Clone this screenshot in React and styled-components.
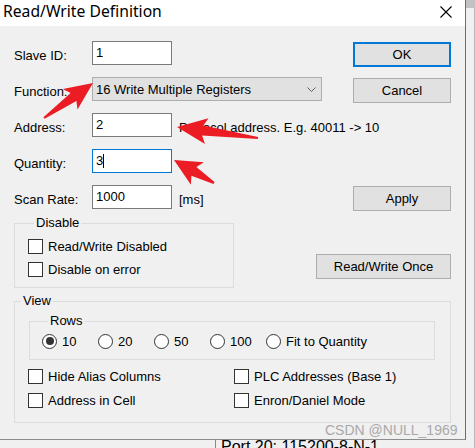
import React from "react";
import styled, { createGlobalStyle } from "styled-components";

const Global = createGlobalStyle`
  html, body { margin: 0; padding: 0; }
  body {
    width: 475px;
    height: 448px;
    overflow: hidden;
    background: #f0f0f0;
    font-family: "Liberation Sans", Arial, sans-serif;
  }
  * { box-sizing: border-box; }
`;

const Desktop = styled.div`
  position: relative;
  width: 475px;
  height: 448px;
  overflow: hidden;
  display: flex;
  flex-direction: column;
  justify-content: flex-end;
  background:
    linear-gradient(#c2c2c2, #c2c2c2) no-repeat right 0 top 0 / 9px 8px,
    linear-gradient(#b8b8b8, #b8b8b8) no-repeat right 0 top 0 / 1px 448px,
    #f0f0f0;
`;

const BackBar = styled.div`
  height: 10px;
  padding-left: 215px;
  display: flex;
`;

const BackText = styled.div`
  border-left: 1px solid #8a8a8a;
  padding-left: 5px;
  font-size: 16px;
  line-height: 18px;
  color: #000;
  white-space: nowrap;
`;

const Dialog = styled.div`
  position: absolute;
  top: 0;
  left: 0;
  width: 466px;
  height: 440px;
  background: #f0f0f0;
  border-right: 1px solid #6e6e6e;
  border-bottom: 1px solid #8c8c8c;
  display: flex;
  flex-direction: column;
`;

const TitleBar = styled.div`
  height: 26px;
  flex: none;
  background: #fff;
  display: flex;
  justify-content: space-between;
  align-items: flex-start;
  padding: 1px 13px 0 3px;
`;

const Title = styled.div`
  font-family: "Noto Sans", "Open Sans", sans-serif;
  font-size: 15.7px;
  line-height: 20px;
  color: #000;
`;

const CloseIcon = styled.svg`
  margin-top: 5px;
  width: 12px;
  height: 12px;
`;

const Body = styled.div`
  flex: 1;
  padding: 15px 14px 0 14px;
  font-size: 13px;
  line-height: 15px;
  color: #000;
`;

const FormGrid = styled.div`
  display: grid;
  grid-template-columns: 78px 261px 98px;
  grid-auto-rows: 24px;
  row-gap: 12px;
`;

const Label = styled.div`
  padding-top: 7px;
  white-space: nowrap;
`;

const Field = styled.div`
  display: flex;
  align-items: flex-start;
  gap: 7px;
`;

const TextBox = styled.div`
  width: 80px;
  height: 24px;
  flex: none;
  background: #fff;
  border: 1px solid ${(p) => (p.$focused ? "#0078d7" : "#7a7a7a")};
  padding: 3px 3px;
  white-space: nowrap;
  display: flex;
`;

const Caret = styled.span`
  display: inline-block;
  width: 1px;
  height: 14px;
  margin-top: 1px;
  background: #000;
`;

const Hint = styled.span`
  padding-top: 7px;
  white-space: nowrap;
`;

const Combo = styled.div`
  width: 230px;
  height: 24px;
  background: #e1e1e1;
  border: 1px solid #adadad;
  display: flex;
  align-items: center;
  justify-content: space-between;
  padding: 0 5px 0 3px;
  white-space: nowrap;
`;

const Chevron = styled.svg`
  width: 9px;
  height: 5px;
`;

const Button = styled.div`
  width: ${(p) => p.$width || 98}px;
  height: 25px;
  margin-top: ${(p) => (p.$flush ? 0 : 1)}px;
  margin-bottom: ${(p) => p.$bottom || 0}px;
  background: #e1e1e1;
  border: ${(p) => (p.$primary ? "2px solid #0078d7" : "1px solid #adadad")};
  display: flex;
  align-items: center;
  justify-content: center;
  white-space: nowrap;
  justify-self: end;
`;

const MiddleRow = styled.div`
  margin-top: 6px;
  display: flex;
  justify-content: space-between;
  align-items: flex-end;
`;

const Group = styled.fieldset`
  margin: ${(p) => p.$margin || "0"};
  padding: ${(p) => p.$padding || "0"};
  width: ${(p) => (p.$width ? `${p.$width}px` : "auto")};
  border: 1px solid #dcdcdc;
  min-inline-size: 0;
`;

const Legend = styled.legend`
  margin-left: 6px;
  padding: 0 2px;
  font-size: 13px;
  line-height: 16px;
`;

const CheckRow = styled.div`
  height: 23px;
  display: flex;
  align-items: center;
  gap: 5px;
  white-space: nowrap;
`;

const Box = styled.span`
  width: 15px;
  height: 15px;
  flex: none;
  background: #fff;
  border: 1px solid #333;
`;

const RadioRow = styled.div`
  height: 20px;
  display: flex;
  align-items: center;
`;

const RadioItem = styled.div`
  width: ${(p) => (p.$auto ? "auto" : "56px")};
  display: flex;
  align-items: center;
  gap: 5px;
  white-space: nowrap;
`;

const Circle = styled.span`
  width: 15px;
  height: 15px;
  flex: none;
  border-radius: 50%;
  border: 1px solid #333;
  background: #fff;
  display: flex;
  align-items: center;
  justify-content: center;
  &::after {
    content: "";
    width: 8px;
    height: 8px;
    border-radius: 50%;
    background: ${(p) => (p.$checked ? "#333" : "transparent")};
  }
`;

const CheckGrid = styled.div`
  margin: 5px 0 0 13px;
  display: grid;
  grid-template-columns: 206px 1fr;
  grid-auto-rows: 23px;
  row-gap: 1px;
`;

const Watermark = styled.div`
  position: absolute;
  left: 325px;
  top: 422px;
  font-size: 14px;
  line-height: 16px;
  color: #a9a9a9;
  white-space: nowrap;
`;

const Overlay = styled.svg`
  position: absolute;
  left: 0;
  top: 0;
  width: 475px;
  height: 448px;
  pointer-events: none;
`;

function arrowPoints(tx, ty, px, py, headLen, headHalf, neckHalf) {
  const dx = px - tx;
  const dy = py - ty;
  const L = Math.hypot(dx, dy);
  const ux = dx / L;
  const uy = dy / L;
  const nx = -uy;
  const ny = ux;
  const bx = px - ux * headLen;
  const by = py - uy * headLen;
  const wx = px - ux * (headLen + 4);
  const wy = py - uy * (headLen + 4);
  const pts = [
    [tx + nx * 1, ty + ny * 1],
    [bx + nx * neckHalf, by + ny * neckHalf],
    [wx + nx * headHalf, wy + ny * headHalf],
    [px, py],
    [wx - nx * headHalf, wy - ny * headHalf],
    [bx - nx * neckHalf, by - ny * neckHalf],
    [tx - nx * 1, ty - ny * 1],
  ];
  return pts.map((p) => `${p[0].toFixed(1)},${p[1].toFixed(1)}`).join(" ");
}

const arrows = [
  [44, 118, 93, 83, 24, 12.5, 5],
  [258, 138, 177, 127, 26, 13, 5],
  [214, 183, 174, 160, 23, 13, 5],
];

function Check({ children }) {
  return (
    <CheckRow>
      <Box />
      <span>{children}</span>
    </CheckRow>
  );
}

function Radio({ checked, auto, children }) {
  return (
    <RadioItem $auto={auto}>
      <Circle $checked={checked} />
      <span>{children}</span>
    </RadioItem>
  );
}

export default function App() {
  return (
    <>
      <Global />
      <Desktop>
        <BackBar>
          <BackText>Port 20: 115200-8-N-1</BackText>
        </BackBar>
        <Dialog>
          <TitleBar>
            <Title>Read/Write Definition</Title>
            <CloseIcon viewBox="0 0 12 12">
              <path d="M0.5 0.5 L11.5 11.5 M11.5 0.5 L0.5 11.5" stroke="#000" strokeWidth="1.1" fill="none" />
            </CloseIcon>
          </TitleBar>
          <Body>
            <FormGrid>
              <Label>Slave ID:</Label>
              <Field>
                <TextBox>1</TextBox>
              </Field>
              <Button $primary>OK</Button>

              <Label>Function:</Label>
              <Field>
                <Combo>
                  <span>16 Write Multiple Registers</span>
                  <Chevron viewBox="0 0 9 5">
                    <path d="M0.5 0.5 L4.5 4.5 L8.5 0.5" stroke="#606060" strokeWidth="1" fill="none" />
                  </Chevron>
                </Combo>
              </Field>
              <Button>Cancel</Button>

              <Label>Address:</Label>
              <Field>
                <TextBox>2</TextBox>
                <Hint>Protocol address. E.g. 40011 -&gt; 10</Hint>
              </Field>
              <span />

              <Label>Quantity:</Label>
              <Field>
                <TextBox $focused>
                  3<Caret />
                </TextBox>
              </Field>
              <span />

              <Label>Scan Rate:</Label>
              <Field>
                <TextBox>1000</TextBox>
                <Hint>[ms]</Hint>
              </Field>
              <Button>Apply</Button>
            </FormGrid>

            <MiddleRow>
              <Group $width={220} $padding="4px 0 6px 13px">
                <Legend>Disable</Legend>
                <Check>Read/Write Disabled</Check>
                <Check>Disable on error</Check>
              </Group>
              <Button $width={135} $flush $bottom={9}>
                Read/Write Once
              </Button>
            </MiddleRow>

            <Group $margin="5px 0 0 0" $padding="0 0 10px 0">
              <Legend>View</Legend>
              <Group $margin="4px 15px 0 14px" $padding="2px 0 8px 12px">
                <Legend>Rows</Legend>
                <RadioRow>
                  <Radio checked>10</Radio>
                  <Radio>20</Radio>
                  <Radio>50</Radio>
                  <Radio>100</Radio>
                  <Radio auto>Fit to Quantity</Radio>
                </RadioRow>
              </Group>
              <CheckGrid>
                <Check>Hide Alias Columns</Check>
                <Check>PLC Addresses (Base 1)</Check>
                <Check>Address in Cell</Check>
                <Check>Enron/Daniel Mode</Check>
              </CheckGrid>
            </Group>
          </Body>
        </Dialog>
        <Watermark>CSDN @NULL_1969</Watermark>
        <Overlay viewBox="0 0 475 448">
          {arrows.map((a, i) => (
            <polygon key={i} points={arrowPoints(...a)} fill="#ec1c24" />
          ))}
        </Overlay>
      </Desktop>
    </>
  );
}
